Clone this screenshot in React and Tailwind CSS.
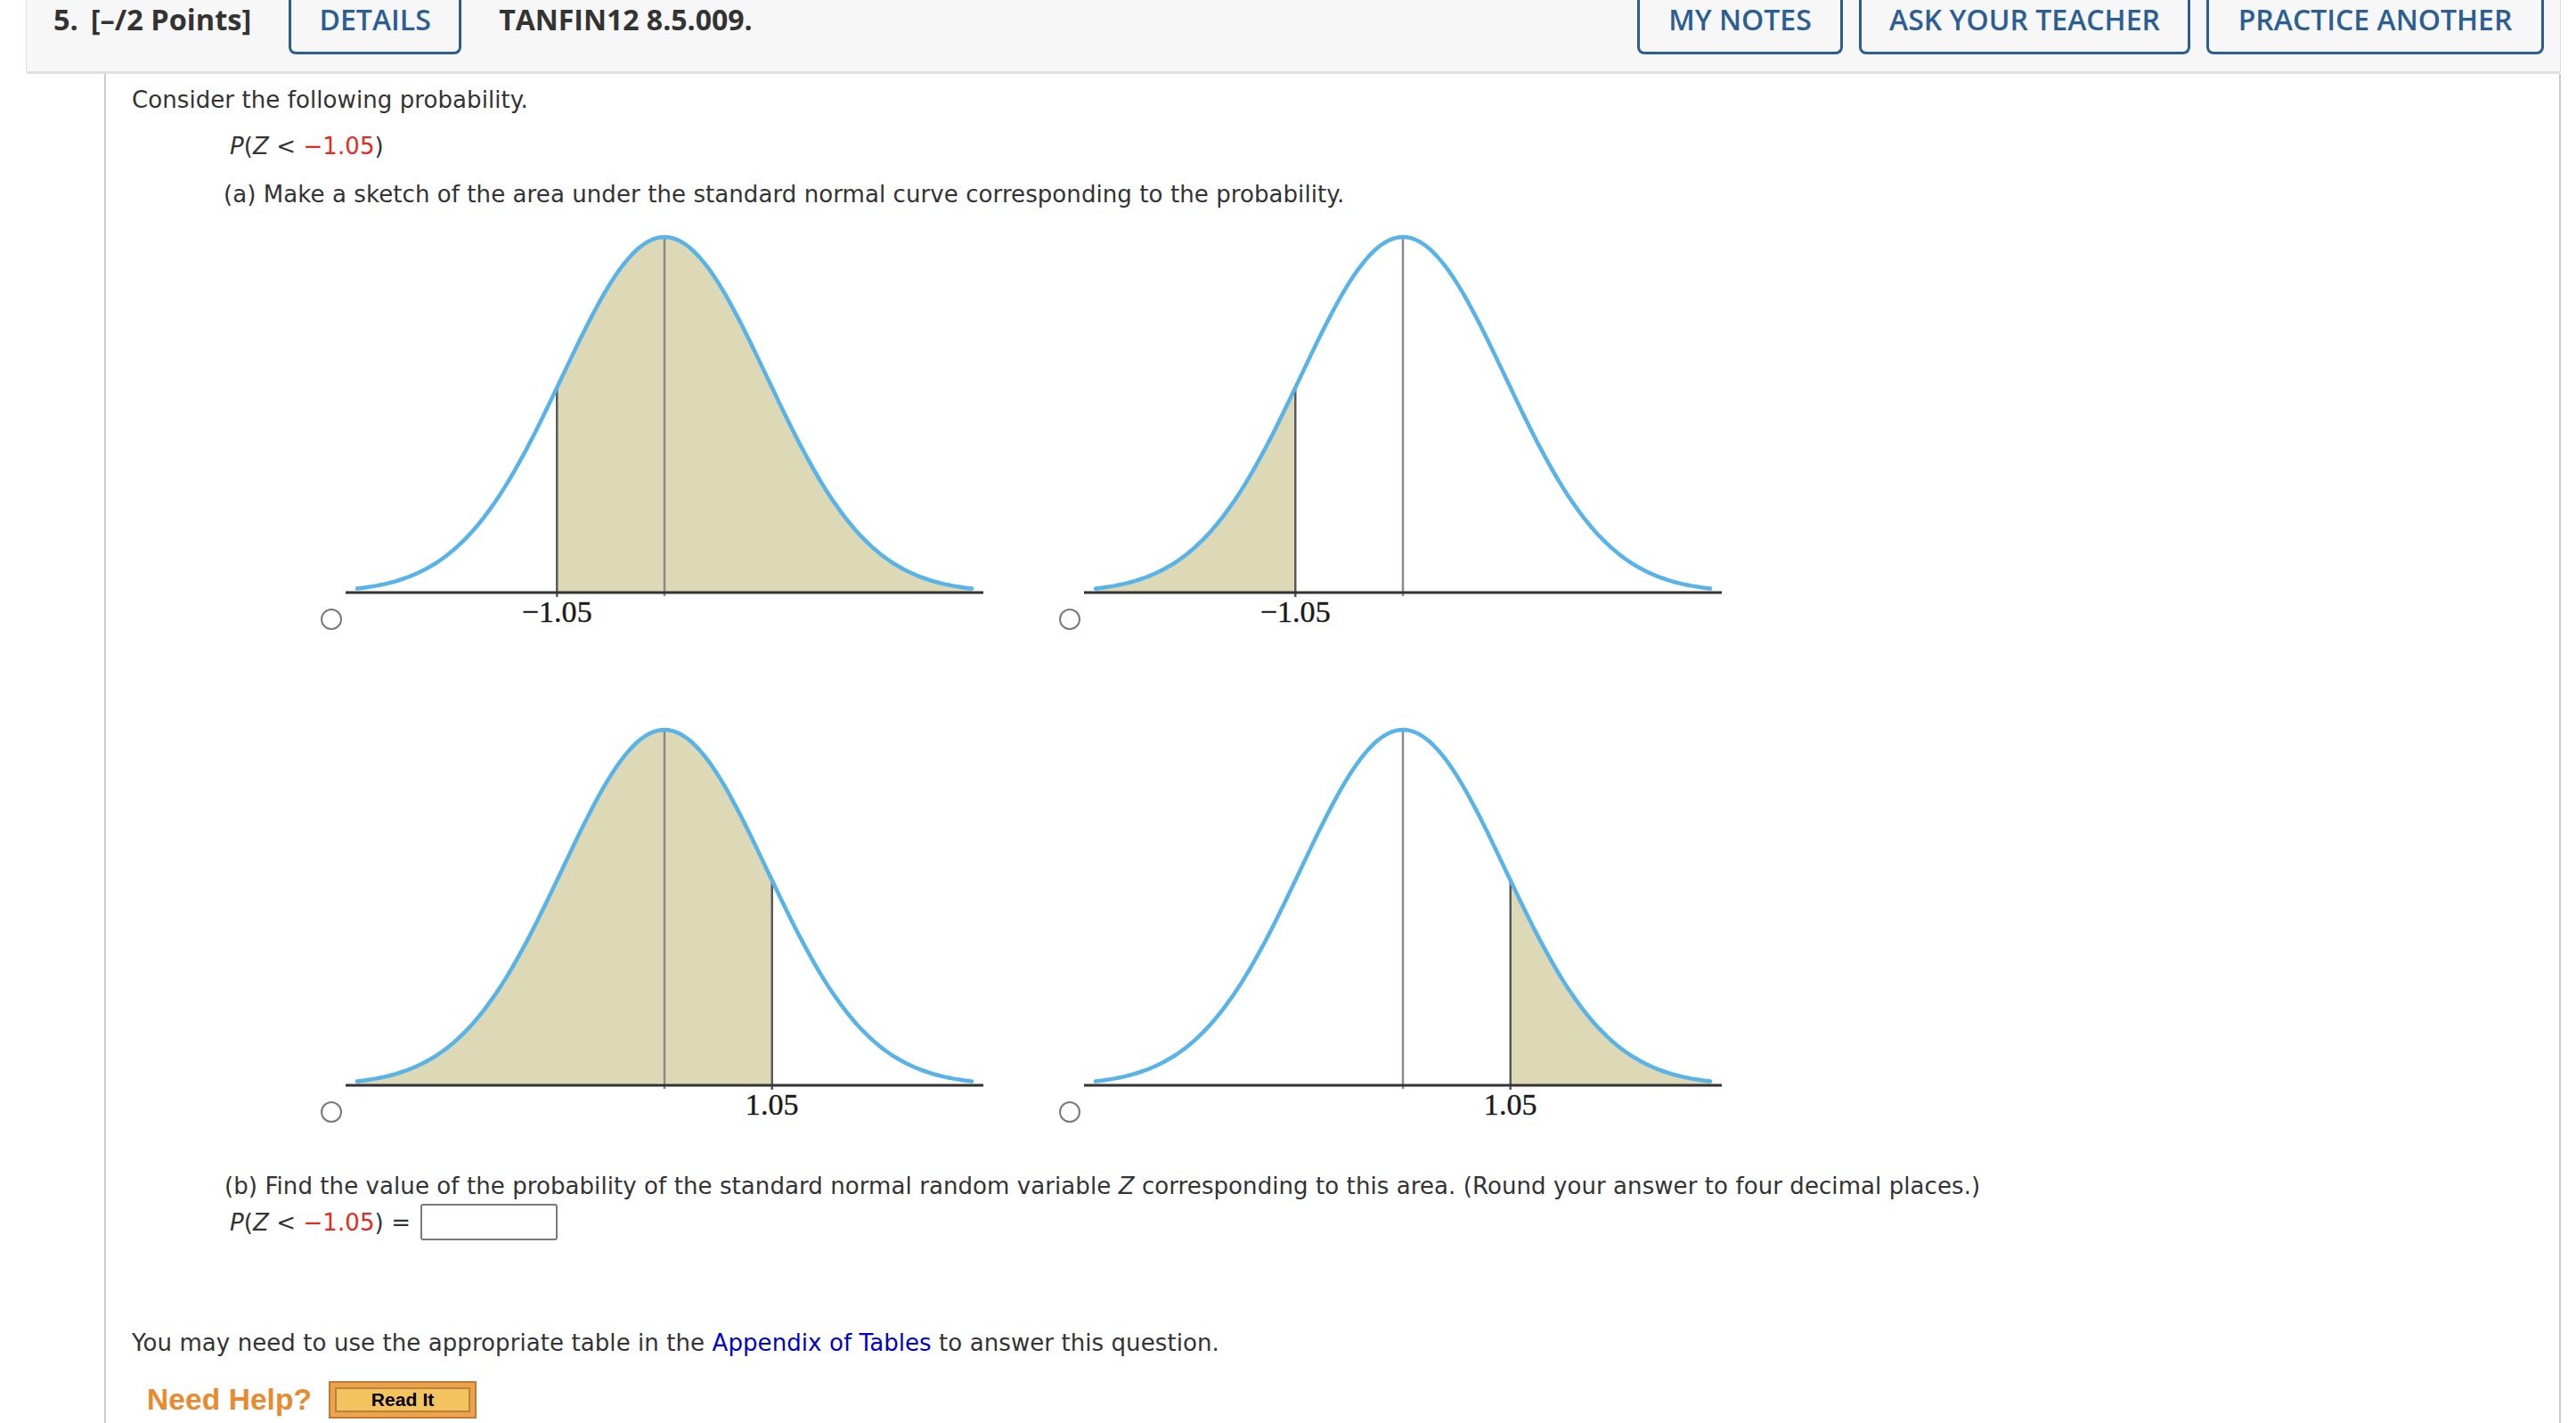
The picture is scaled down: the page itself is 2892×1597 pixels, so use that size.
import React from "react";

const W = 725;
const H = 450;
const AY = 408; // axis y inside the svg
const MX = 361; // mean x
const SD = 115; // px per standard deviation
const PH = 399; // peak height above axis

const fx = (z) => MX + z * SD;
const fy = (z) => AY - PH * Math.exp((-z * z) / 2);

function curve(a, b, n = 160) {
  const pts = [];
  for (let i = 0; i <= n; i++) {
    const z = a + ((b - a) * i) / n;
    pts.push(`${fx(z).toFixed(1)},${fy(z).toFixed(1)}`);
  }
  return pts;
}

function NormalGraph({ z, side, label }) {
  const a = side === "left" ? -3 : z;
  const b = side === "left" ? z : 3;
  const shade = `M${fx(a).toFixed(1)},${AY} L${curve(a, b).join(" L")} L${fx(b).toFixed(1)},${AY} Z`;
  const line = `M${curve(-3, 3).join(" L")}`;

  return (
    <svg width={W} height={H} viewBox={`0 0 ${W} ${H}`} className="block">
      <path d={shade} fill="#ddd9b6" />
      <line x1={MX} y1={fy(0)} x2={MX} y2={AY + 4} stroke="#8a8a8a" strokeWidth="2.5" />
      <line x1={fx(z)} y1={fy(z)} x2={fx(z)} y2={AY + 5} stroke="#5a5a5a" strokeWidth="2.5" />
      <line x1="3" y1={AY} x2="719" y2={AY} stroke="#333" strokeWidth="3" />
      <path d={line} fill="none" stroke="#58b3e8" strokeWidth="4.5" strokeLinejoin="round" strokeLinecap="round" />
      <text
        x={fx(z)}
        y="441"
        textAnchor="middle"
        fontFamily="'Liberation Serif', serif"
        fontSize="34"
        fill="#1a1a1a"
        stroke="#1a1a1a"
        strokeWidth="0.4"
      >
        {label}
      </text>
    </svg>
  );
}

function Choice({ z, side, label }) {
  return (
    <div className="flex items-end">
      <span className="inline-block w-[24px] h-[24px] rounded-full border-2 border-[#7a7a7a] bg-white" />
      <div className="ml-[1px]">
        <NormalGraph z={z} side={side} label={label} />
      </div>
    </div>
  );
}

function HeaderButton({ children, width }) {
  return (
    <div
      className={`${width} h-[61px] border-x-[3px] border-b-[3px] border-[#2b5f93] rounded-b-[8px] text-center text-[32px] leading-[44px] font-semibold text-[#2b5f93]`}
    >
      {children}
    </div>
  );
}

function Prob() {
  return (
    <>
      <i>P</i>(<i>Z</i> &lt; <span className="text-[#e8281e]">−1.05</span>)
    </>
  );
}

export default function App() {
  return (
    <div className="min-h-[1597px] bg-white">
      {/* Question header */}
      <div className="ml-[29px] mr-[17px] h-[83px] bg-[#f7f7f7] border-x border-[#dddddd] border-b-[3px] border-b-[#e0e0e0] rounded-b-[4px] flex items-start font-['Open_Sans',sans-serif]">
        <div className="pl-[30px] leading-[44px] text-[32.5px] font-bold text-[#333]">
          <span>5.</span>
          <span className="ml-[14px]">[–/2 Points]</span>
        </div>
        <div className="ml-[42px]">
          <HeaderButton width="w-[194px]">DETAILS</HeaderButton>
        </div>
        <div className="ml-[42px] leading-[44px] text-[32px] font-bold text-[#333]">
          TANFIN12 8.5.009.
        </div>
        <div className="ml-auto mr-[18px] flex gap-[18px]">
          <HeaderButton width="w-[231px]">MY NOTES</HeaderButton>
          <HeaderButton width="w-[372px]">ASK YOUR TEACHER</HeaderButton>
          <HeaderButton width="w-[379px]">PRACTICE ANOTHER</HeaderButton>
        </div>
      </div>

      {/* Question body */}
      <div className="ml-[117px] mr-[17px] min-h-[1514px] border-x-2 border-[#cccccc] pl-[29px] pt-[9px] text-[26px] tracking-[0.08px] leading-[40px] text-[#333] font-['DejaVu_Sans',Verdana,sans-serif]">
        <p>Consider the following probability.</p>
        <p className="mt-[12px] pl-[110px]">
          <Prob />
        </p>
        <p className="mt-[14px] pl-[103px]">
          (a) Make a sketch of the area under the standard normal curve corresponding to the probability.
        </p>

        <div className="mt-[19px] ml-[212px] grid grid-cols-[750px_750px] gap-x-[79px] gap-y-[103px]">
          <Choice z={-1.05} side="right" label="−1.05" />
          <Choice z={-1.05} side="left" label="−1.05" />
          <Choice z={1.05} side="left" label="1.05" />
          <Choice z={1.05} side="right" label="1.05" />
        </div>

        <p className="mt-[51px] pl-[104px]">
          (b) Find the value of the probability of the standard normal random variable <i>Z</i> corresponding to this
          area. (Round your answer to four decimal places.)
        </p>
        <div className="pl-[110px] h-[41px] flex items-center">
          <span>
            <Prob /> =
          </span>
          <span className="ml-[11px] inline-block w-[154px] h-[41px] border-2 border-[#7a7a7a] rounded-[3px] bg-white" />
        </div>

        <p className="mt-[95px]">
          You may need to use the appropriate table in the{" "}
          <a className="text-[#0000cc]">Appendix of Tables</a> to answer this question.
        </p>

        <div className="mt-[23px] pl-[17px] flex items-center gap-[19px] font-['Liberation_Sans',Arial,sans-serif] font-bold">
          <span className="text-[33.5px] leading-[42px] text-[#e88a2e]">Need Help?</span>
          <div className="w-[166px] h-[42px] border-2 border-[#bf7a36] bg-[#eea24b] p-[5px]">
            <div className="h-full border-2 border-[#b8843c] bg-[#f2c35e] flex items-center justify-center text-[21px] text-black">
              Read It
            </div>
          </div>
        </div>
      </div>
    </div>
  );
}
